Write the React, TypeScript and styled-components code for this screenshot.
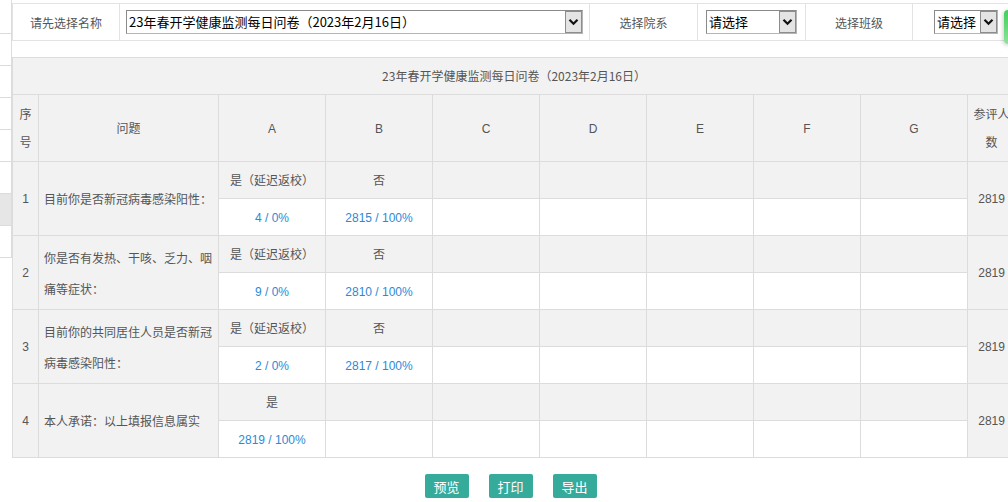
import React from 'react';
import styled, { createGlobalStyle } from 'styled-components';

const GlobalStyle = createGlobalStyle`
  html, body {
    margin: 0;
    padding: 0;
    background: #fff;
    overflow: hidden;
  }
  body {
    font-family: "Noto Sans CJK SC", "Liberation Sans", sans-serif;
    font-size: 12px;
    color: #555;
  }
`;

type Question = {
  no: number;
  text: string;
  options: { label: string; value: string }[];
  total: number;
};

const questions: Question[] = [
  {
    no: 1,
    text: '目前你是否新冠病毒感染阳性：',
    options: [
      { label: '是（延迟返校）', value: '4 / 0%' },
      { label: '否', value: '2815 / 100%' },
    ],
    total: 2819,
  },
  {
    no: 2,
    text: '你是否有发热、干咳、乏力、咽痛等症状：',
    options: [
      { label: '是（延迟返校）', value: '9 / 0%' },
      { label: '否', value: '2810 / 100%' },
    ],
    total: 2819,
  },
  {
    no: 3,
    text: '目前你的共同居住人员是否新冠病毒感染阳性：',
    options: [
      { label: '是（延迟返校）', value: '2 / 0%' },
      { label: '否', value: '2817 / 100%' },
    ],
    total: 2819,
  },
  {
    no: 4,
    text: '本人承诺：以上填报信息属实',
    options: [{ label: '是', value: '2819 / 100%' }],
    total: 2819,
  },
];

const letters = ['A', 'B', 'C', 'D', 'E', 'F', 'G'];
const title = '23年春开学健康监测每日问卷（2023年2月16日）';

const Page = styled.div`
  display: flex;
  align-items: flex-start;
  width: 1015px;
  position: relative;
`;

const Sidebar = styled.ul`
  width: 11px;
  margin: 0;
  padding: 0;
  list-style: none;
  border-right: 1px solid #dcdcdc;
  flex-shrink: 0;
`;

const SideItem = styled.li<{ $active?: boolean; $first?: boolean }>`
  height: ${(p) => (p.$first ? '33px' : '31px')};
  border-bottom: 1px solid #dcdcdc;
  background: ${(p) => (p.$active ? '#e6e6e6' : '#fff')};
`;

const Main = styled.div`
  flex: 1;
  padding-top: 3px;
`;

const FilterBar = styled.div`
  display: grid;
  grid-template-columns: 107px 470px 108px 108px 107px 107px;
  height: 38px;
  box-sizing: border-box;
  border-top: 1px solid #e3e3e3;
  border-bottom: 1px solid #e3e3e3;
  border-left: 1px solid #e3e3e3;
`;

const FilterCell = styled.div`
  display: flex;
  align-items: center;
  justify-content: center;
  border-right: 1px solid #e3e3e3;
  color: #555;
  font-size: 12px;
`;

const SelectBox = styled.div<{ $w: number }>`
  width: ${(p) => p.$w}px;
  height: 24px;
  display: flex;
  box-sizing: border-box;
  border: 1px solid #8a8a8a;
  border-right-color: #b5b5b5;
  border-bottom-color: #b5b5b5;
  background: #fff;
`;

const SelectText = styled.span`
  flex: 1;
  overflow: hidden;
  white-space: nowrap;
  padding-left: 2px;
  line-height: 22px;
  font-size: 13px;
  color: #000;
`;

const ArrowBtn = styled.span`
  width: 17px;
  box-sizing: border-box;
  border: 1px solid #8d8d8d;
  background: #e4e4e4;
  display: flex;
  align-items: center;
  justify-content: center;
`;

const Table = styled.table`
  margin-top: 16px;
  border-collapse: collapse;
  table-layout: fixed;
  width: 1003px;
`;

const Cell = styled.td<{ $white?: boolean; $left?: boolean; $narrow?: boolean; $lh?: number; $blue?: boolean }>`
  border: 1px solid #dcdcdc;
  background: ${(p) => (p.$white ? '#fff' : '#f2f2f2')};
  text-align: ${(p) => (p.$left ? 'left' : 'center')};
  padding: ${(p) => (p.$left ? '0 4px 0 5px' : p.$narrow ? '0 4px' : '0')};
  line-height: ${(p) => p.$lh ?? 20}px;
  color: ${(p) => (p.$blue ? '#2b8ad6' : '#555')};
  font-size: 12px;
  vertical-align: middle;
  word-break: break-all;
`;

const TitleRow = styled.tr`
  height: 37px;
`;

const HeadRow = styled.tr`
  height: 67px;
`;

const SubRow = styled.tr`
  height: 37px;
`;

const Letter = styled.span`
  font-family: "Liberation Sans", Arial, sans-serif;
`;

const Actions = styled.div`
  display: flex;
  justify-content: center;
  gap: 20px;
  margin-top: 16px;
  padding-right: 11px;
`;

const Button = styled.button`
  width: 44px;
  height: 24px;
  border: none;
  border-radius: 2px;
  background: #36ab9c;
  color: #fff;
  font-family: "Noto Sans CJK SC", sans-serif;
  font-size: 13px;
  padding: 0;
  cursor: pointer;
`;

const FloatTab = styled.div`
  position: absolute;
  left: 1004px;
  top: 10px;
  width: 8px;
  height: 34px;
  border-radius: 4px 0 0 4px;
  background: linear-gradient(#3fcf5a, #8ee39a);
  box-shadow: -1px 1px 4px rgba(0, 0, 0, 0.2);
`;

const Chevron = () => (
  <svg width="11" height="8" viewBox="0 0 11 8">
    <path d="M1.5 1.8 L5.5 5.8 L9.5 1.8" fill="none" stroke="#111" strokeWidth="2.2" />
  </svg>
);

const FakeSelect: React.FC<{ width: number; text: string }> = ({ width, text }) => (
  <SelectBox $w={width}>
    <SelectText>{text}</SelectText>
    <ArrowBtn>
      <Chevron />
    </ArrowBtn>
  </SelectBox>
);

export default function App() {
  return (
    <>
      <GlobalStyle />
      <Page>
        <Sidebar>
          {Array.from({ length: 8 }).map((_, i) => (
            <SideItem key={i} $first={i === 0} $active={i === 6} />
          ))}
        </Sidebar>
        <Main>
          <FilterBar>
            <FilterCell>请先选择名称</FilterCell>
            <FilterCell>
              <FakeSelect width={457} text={title} />
            </FilterCell>
            <FilterCell>选择院系</FilterCell>
            <FilterCell>
              <FakeSelect width={91} text="请选择" />
            </FilterCell>
            <FilterCell>选择班级</FilterCell>
            <FilterCell>
              <FakeSelect width={64} text="请选择" />
            </FilterCell>
          </FilterBar>

          <Table>
            <colgroup>
              <col style={{ width: 26 }} />
              <col style={{ width: 180 }} />
              {letters.map((l) => (
                <col key={l} style={{ width: 107 }} />
              ))}
              <col style={{ width: 48 }} />
            </colgroup>
            <tbody>
              <TitleRow>
                <Cell colSpan={10}>{title}</Cell>
              </TitleRow>
              <HeadRow>
                <Cell $lh={28} $narrow>序号</Cell>
                <Cell>问题</Cell>
                {letters.map((l) => (
                  <Cell key={l}>
                    <Letter>{l}</Letter>
                  </Cell>
                ))}
                <Cell $lh={28}>参评人数</Cell>
              </HeadRow>
              {questions.map((q) => (
                <React.Fragment key={q.no}>
                  <SubRow>
                    <Cell rowSpan={2}>
                      <Letter>{q.no}</Letter>
                    </Cell>
                    <Cell rowSpan={2} $left $lh={31}>
                      {q.text}
                    </Cell>
                    {letters.map((l, i) => (
                      <Cell key={l}>{q.options[i]?.label ?? ''}</Cell>
                    ))}
                    <Cell rowSpan={2}>
                      <Letter>{q.total}</Letter>
                    </Cell>
                  </SubRow>
                  <SubRow>
                    {letters.map((l, i) => (
                      <Cell key={l} $white $blue>
                        <Letter>{q.options[i]?.value ?? ''}</Letter>
                      </Cell>
                    ))}
                  </SubRow>
                </React.Fragment>
              ))}
            </tbody>
          </Table>

          <Actions>
            <Button>预览</Button>
            <Button>打印</Button>
            <Button>导出</Button>
          </Actions>
        </Main>
        <FloatTab />
      </Page>
    </>
  );
}
